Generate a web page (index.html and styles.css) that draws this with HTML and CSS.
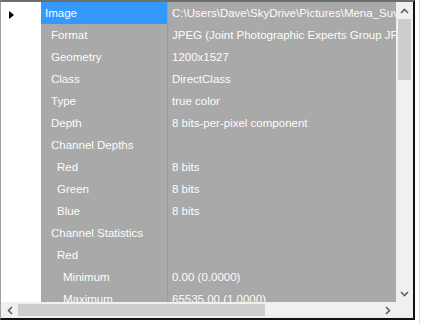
FILE: index.html
```html
<!DOCTYPE html>
<html>
<head>
<meta charset="utf-8">
<link rel="stylesheet" href="styles.css">
</head>
<body>
<div class="page">
<div class="frame">
  <div class="viewport">
    <div class="row current">
      <div class="hdr"><span class="arrow"></span></div>
      <div class="name sel">Image</div>
      <div class="val">C:\Users\Dave\SkyDrive\Pictures\Mena_Suvari_1200x1527.jpg</div>
    </div>
    <div class="row"><div class="hdr"></div><div class="name l1">Format</div><div class="val">JPEG (Joint Photographic Experts Group JFIF format)</div></div>
    <div class="row"><div class="hdr"></div><div class="name l1">Geometry</div><div class="val">1200x1527</div></div>
    <div class="row"><div class="hdr"></div><div class="name l1">Class</div><div class="val">DirectClass</div></div>
    <div class="row"><div class="hdr"></div><div class="name l1">Type</div><div class="val">true color</div></div>
    <div class="row"><div class="hdr"></div><div class="name l1">Depth</div><div class="val">8 bits-per-pixel component</div></div>
    <div class="row"><div class="hdr"></div><div class="name l1">Channel Depths</div><div class="val"></div></div>
    <div class="row"><div class="hdr"></div><div class="name l2">Red</div><div class="val">8 bits</div></div>
    <div class="row"><div class="hdr"></div><div class="name l2">Green</div><div class="val">8 bits</div></div>
    <div class="row"><div class="hdr"></div><div class="name l2">Blue</div><div class="val">8 bits</div></div>
    <div class="row"><div class="hdr"></div><div class="name l1">Channel Statistics</div><div class="val"></div></div>
    <div class="row"><div class="hdr"></div><div class="name l2">Red</div><div class="val"></div></div>
    <div class="row"><div class="hdr"></div><div class="name l3">Minimum</div><div class="val">0.00 (0.0000)</div></div>
    <div class="row"><div class="hdr"></div><div class="name l3">Maximum</div><div class="val">65535.00 (1.0000)</div></div>
  </div>
  <div class="vscroll">
    <div class="sbtn"><svg width="9" height="6" viewBox="0 0 9 6"><path d="M1 5 L4.5 1.5 L8 5" fill="none" stroke="#606060" stroke-width="1.6"/></svg></div>
    <div class="vtrack"><div class="vthumb"></div></div>
    <div class="sbtn"><svg width="9" height="6" viewBox="0 0 9 6"><path d="M1 1 L4.5 4.5 L8 1" fill="none" stroke="#606060" stroke-width="1.6"/></svg></div>
  </div>
  <div class="hscroll">
    <div class="hbtn"><svg width="6" height="9" viewBox="0 0 6 9"><path d="M5 1 L1.5 4.5 L5 8" fill="none" stroke="#606060" stroke-width="1.6"/></svg></div>
    <div class="htrack"><div class="hthumb"></div></div>
    <div class="hbtn"><svg width="6" height="9" viewBox="0 0 6 9"><path d="M1 1 L4.5 4.5 L1 8" fill="none" stroke="#606060" stroke-width="1.6"/></svg></div>
  </div>
  <div class="corner"></div>
</div>
<div class="edge"></div>
</div>
</body>
</html>
```
FILE: styles.css
```css
html, body {
  margin: 0;
  padding: 0;
  background: #ffffff;
}
body {
  width: 421px;
  height: 323px;
  overflow: hidden;
  font-family: "Liberation Sans", Arial, sans-serif;
  font-size: 11.5px;
}
.page {
  display: flex;
  align-items: flex-start;
}
.edge {
  width: 4px;
  height: 323px;
  border-right: 1px solid #dcdcdc;
}
.frame {
  width: 412px;
  height: 316px;
  border-top: 2px solid #6e6e6e;
  border-left: 1px solid #a0a0a0;
  border-right: 2px solid #111111;
  border-bottom: 2px solid #111111;
  display: grid;
  grid-template-columns: 1fr 17px;
  grid-template-rows: 1fr 16px;
  background: #f0f0f0;
}
.viewport {
  overflow: hidden;
  background: #ffffff;
}
.row {
  display: grid;
  grid-template-columns: 40px 127px 600px;
  height: 22px;
  white-space: nowrap;
}
.hdr {
  background: #ffffff;
  border-bottom: 1px solid #e6e6e6;
  position: relative;
}
.arrow {
  position: absolute;
  left: 8px;
  top: 9px;
  width: 0;
  height: 0;
  border-top: 4px solid transparent;
  border-bottom: 4px solid transparent;
  border-left: 5px solid #000000;
}
.name, .val {
  background: #a9a9a9;
  color: #fcfcfc;
  border-bottom: 1px solid #9c9c9c;
  line-height: 22px;
}
.name {
  border-right: 1px solid #9c9c9c;
  padding-left: 4px;
}
.name.sel {
  background: #3399ff;
  border-bottom-color: #3399ff;
}
.name.l1 { padding-left: 10px; }
.name.l2 { padding-left: 16px; }
.name.l3 { padding-left: 22px; }
.val {
  padding-left: 4px;
}
.vscroll {
  display: flex;
  flex-direction: column;
  background: #f0f0f0;
}
.sbtn {
  height: 17px;
  display: flex;
  align-items: center;
  justify-content: center;
}
.vtrack {
  flex: 1;
  padding: 0 2px;
}
.vthumb {
  height: 61px;
  background: #cdcdcd;
}
.hscroll {
  display: flex;
  background: #f0f0f0;
}
.hbtn {
  width: 17px;
  display: flex;
  align-items: center;
  justify-content: center;
}
.htrack {
  flex: 1;
  padding: 2px 0;
}
.hthumb {
  width: 247px;
  height: 100%;
  background: #cdcdcd;
}
.corner {
  background: #f0f0f0;
}
```
